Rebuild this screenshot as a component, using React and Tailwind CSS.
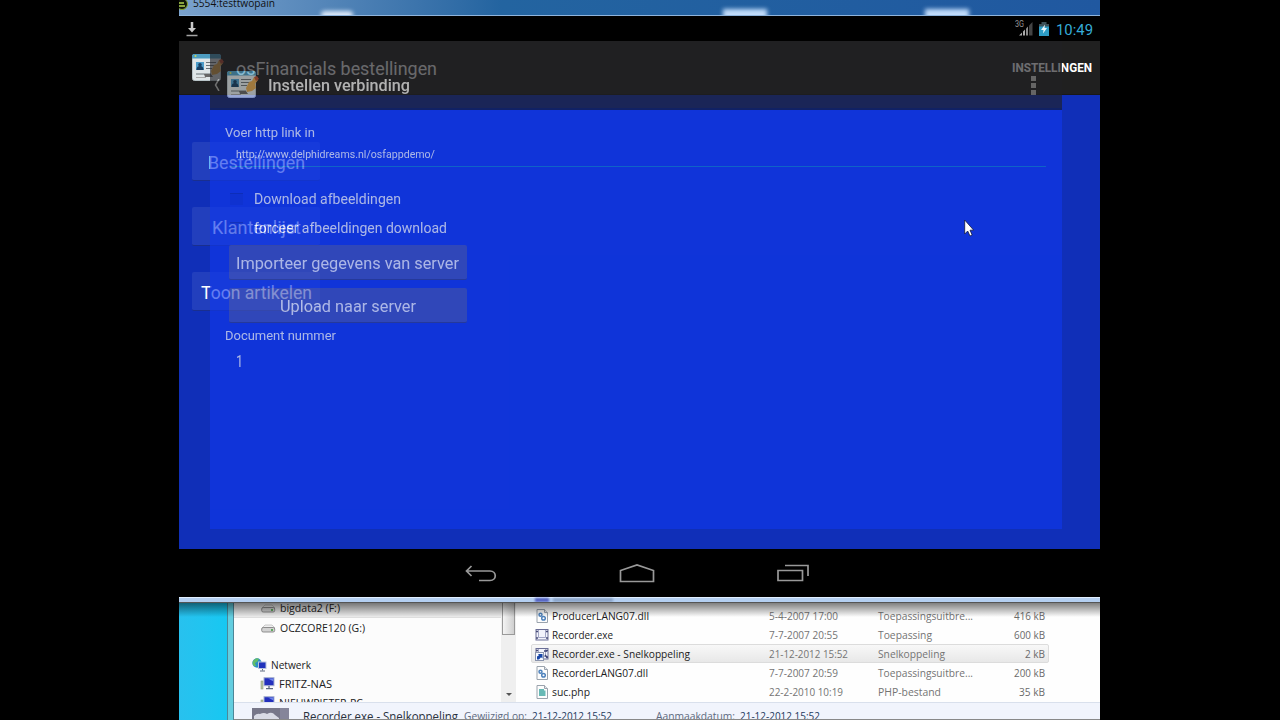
import React from 'react';

const files = [
    { name: 'ProducerLANG07.dll', date: '5-4-2007 17:00', type: 'Toepassingsuitbre...', size: '416 kB', icon: 'dll', w: 97, dw: 69, tw: 95, sw: 31 },
    { name: 'Recorder.exe', date: '7-7-2007 20:55', type: 'Toepassing', size: '600 kB', icon: 'exe', w: 61, dw: 69, tw: 54, sw: 31 },
    { name: 'Recorder.exe - Snelkoppeling', date: '21-12-2012 15:52', type: 'Snelkoppeling', size: '2 kB', icon: 'link', selected: true, w: 138, dw: 79, tw: 67, sw: 20 },
    { name: 'RecorderLANG07.dll', date: '7-7-2007 20:59', type: 'Toepassingsuitbre...', size: '200 kB', icon: 'dll', w: 96, dw: 69, tw: 95, sw: 31 },
    { name: 'suc.php', date: '22-2-2010 10:19', type: 'PHP-bestand', size: '35 kB', icon: 'php', w: 38, dw: 74, tw: 63, sw: 26 },
];

// One line of text that is spread to a fixed width
function Label({ w, size, color, font = 'Open Sans', weight = 400, h = 20, children }) {
    return (
        <svg width={w} height={h} className="block shrink-0 overflow-visible">
            <text x="0" y={h / 2 + size * 0.36} textLength={w} lengthAdjust="spacingAndGlyphs" fontFamily={`"${font}", sans-serif`} fontSize={size} fontWeight={weight} fill={color}>{children}</text>
        </svg>
    );
}

function AppIcon() {
    return (
        <svg width="32" height="28" viewBox="0 0 32 28" className="block shrink-0">
            <rect x="0.5" y="0.5" width="28" height="26" rx="2" fill="#dfe6e8" stroke="#b9c4c8" />
            <path d="M0 4.500V2Q0 0 2 0h25q2 0 2 2v2.500z" fill="#4d9cc0" />
            <circle cx="3.500" cy="2" r="1" fill="#c9d85a" />
            <rect x="4" y="8" width="8" height="8" fill="#4b9cc9" />
            <circle cx="8" cy="10.700" r="1.800" fill="#173f63" />
            <path d="M4.500 16q0-4 3.500-4t3.500 4z" fill="#173f63" />
            <path d="M14 8.500h10M14 11.500h9M14 14.500h6M4 20h15" stroke="#697277" strokeWidth="1" />
            <path d="M4 23.500h10" stroke="#aaa" />
            <path d="M12 20h7l2 3h-8z" fill="#666" />
            <path d="M19 17l3-6 3-1 2-4 4 3-3 4 1 4-4 3-5 1z" fill="#e3a94f" />
            <path d="M27 6l3-1 2 3-3 2z" fill="#b94b32" />
        </svg>
    );
}

function FileIcon({ kind }) {
    if (kind === 'exe' || kind === 'link') {
        return (
            <svg width="14" height="14" viewBox="0 0 14 14" className="block shrink-0">
                <rect x="1" y="1.500" width="12" height="10.500" fill="#f2f3fb" stroke="#6a6e96" />
                <path d="M1 3.500h2M1 10h2M11 3.500h2M11 10h2" stroke="#484c78" strokeWidth="1.500" />
                <path d="M3.500 2v7.500h7V2" fill="none" stroke="#8e93b8" strokeWidth=".8" />
                {kind === 'link' && (
                    <>
                        <rect x="0.500" y="5.500" width="8" height="8" fill="#f7f9ff" stroke="#8a94ad" />
                        <path d="M2 12.500V9.500L4 8.200 3 7h4.500v4.500L6 10.200l-2 2.300z" fill="#1746a8" />
                        <path d="M10 8l2.500 3M9 4h3" stroke="#3d4478" strokeWidth="1.500" />
                    </>
                )}
            </svg>
        );
    }
    return (
        <svg width="14" height="14" viewBox="0 0 14 14" className="block shrink-0">
            <path d="M2 .5h7.500l3 3v10H2z" fill="#fdfdfd" stroke="#9aa3ad" />
            <path d="M9.500.5v3h3" fill="#e4e8ee" stroke="#9aa3ad" />
            {kind === 'dll' ? (
                <g fill="none" stroke="#4f83bd" strokeWidth="1.500">
                    <circle cx="5.500" cy="5.800" r="1.500" />
                    <circle cx="8.500" cy="9.300" r="1.800" />
                </g>
            ) : (
                <path d="M4 4h5v1.500h1.500v5.500H4z" fill="#67b9b5" />
            )}
        </svg>
    );
}

function DriveIcon() {
    return (
        <svg width="16" height="10" viewBox="0 0 16 10" className="block shrink-0">
            <path d="M2 5l3-3h7l3 3z" fill="#f0f0f0" stroke="#b5b5b5" strokeWidth=".7" />
            <rect x="1.700" y="4.500" width="13" height="4.500" rx="1.500" fill="#d2d2d2" stroke="#858585" strokeWidth=".9" />
            <path d="M11 7h2" stroke="#3b9b3b" strokeWidth="1.500" />
        </svg>
    );
}

function ComputerIcon() {
    return (
        <svg width="15" height="13" viewBox="0 0 15 13" className="block shrink-0">
            <rect x="1" y="4" width="2" height="8" fill="#b8c7a0" stroke="#8c9a80" strokeWidth=".6" />
            <rect x="4" y=".7" width="10" height="8" fill="#2330bd" stroke="#a9b3cf" />
            <path d="M8 1.500h5.500v3z" fill="#6f86e8" />
            <path d="M9 9v2M6 11.700h7" stroke="#5e6a80" strokeWidth="1.300" />
        </svg>
    );
}

function NetworkIcon() {
    return (
        <svg width="15" height="14" viewBox="0 0 15 14" className="block shrink-0">
            <circle cx="5" cy="5" r="4.700" fill="#2a8fc4" />
            <path d="M1 3q3-4 6-2L5 4 3 5l1 3-2 0Q0 6 1 3z" fill="#62bd68" />
            <rect x="6.500" y="4" width="7.500" height="6.500" fill="#1f32bb" stroke="#b6c2de" />
            <path d="M10.500 11v1.500M8 13h5" stroke="#5e6a80" />
        </svg>
    );
}

function TitleBar() {
    return (
        <div className="relative flex h-4 shrink-0 items-start overflow-hidden border-b border-[#8fb4dc] bg-linear-to-r from-[#7aa2cd] via-[#2364a0] via-35% to-[#2058a0]">
            <div className="absolute top-[11px] left-[142px] h-2 w-8 rounded-full bg-[#dbe8f8] blur-[2px]" />
            <div className="absolute top-[9px] left-[544px] h-3 w-11 bg-[#c0dbfa] blur-[2px]" />
            <div className="absolute top-[9px] left-[746px] h-3 w-11 bg-[#c0dbfa] blur-[2px]" />
            <svg width="14" height="11" viewBox="0 0 14 11" className="block">
                <circle cx="3" cy="4" r="5.500" fill="#10180a" stroke="#86a52e" />
                <path d="M0 3h5M0 6h6" stroke="#b1d34f" strokeWidth="1.500" />
            </svg>
            <div className="-mt-[7px]">
                <Label w={82} size={11.5} color="#111">5554:testtwopain</Label>
            </div>
        </div>
    );
}

function StatusBar() {
    return (
        <div className="flex h-[25px] shrink-0 items-center justify-between bg-black pr-[7px] pl-[7px]">
            <svg width="12" height="16" viewBox="0 0 12 16" className="block">
                <path d="M6 1v7" stroke="#c8c8c8" strokeWidth="2.500" />
                <path d="M2 7h8l-4 4.500z" fill="#c8c8c8" />
                <path d="M.5 14.500h11" stroke="#a5a5a5" strokeWidth="1.500" />
            </svg>
            <div className="flex items-center">
                <svg width="18" height="17" viewBox="0 0 18 17" className="block">
                    <text x="0" y="7" textLength="9" lengthAdjust="spacingAndGlyphs" fontFamily="Roboto, sans-serif" fontSize="8.500" fill="#999">3G</text>
                    <path d="M4 15.500l3-3v3zM8 11.500l2-2v6H8z" fill="#aaa" />
                    <path d="M11 8.500l2-2v9h-2z" fill="#8b8b8b" />
                    <path d="M14 5.500l3.500-3.500v13.500H14z" fill="#444" />
                </svg>
                <svg width="10" height="14" viewBox="0 0 10 14" className="mr-[7px] ml-[6px] block">
                    <path d="M2.500 0h5v2H10v12H0V2h2.500z" fill="#3c5058" />
                    <path d="M0 4.500h10V14H0z" fill="#2d9cc5" />
                    <path d="M6 2.500L2 8h2.500L4 11.500 8 6H5.500z" fill="#e8f6fb" />
                </svg>
                <Label w={37} size={15.5} color="#35acd8" font="Roboto">10:49</Label>
            </div>
        </div>
    );
}

function MenuButton({ w, children }) {
    return (
        <div className="flex h-[39px] w-32 items-center justify-center rounded-xs border-b border-black/25 bg-white/8 pt-[3px]">
            <Label w={w} size={18} color="#fff" font="Roboto">{children}</Label>
        </div>
    );
}

function MainScreen() {
    return (
        <div className="flex h-full flex-col bg-[#102fb8]">
            <div className="flex h-[54px] items-center justify-between border-b border-[#181818] bg-[#202020] pr-2 pl-[13px]">
                <div className="flex items-center gap-3">
                    <AppIcon />
                    <Label w={201} size={18.5} color="#f3f3f3" font="Roboto" h={24}>osFinancials bestellingen</Label>
                </div>
                <Label w={80} size={12} color="#ffffff" font="Roboto" weight={700}>INSTELLINGEN</Label>
            </div>
            <div className="flex flex-col gap-[26px] pt-[47px] pl-[13px]">
                <MenuButton w={97}>Bestellingen</MenuButton>
                <MenuButton w={89}>Klantenlijst</MenuButton>
                <MenuButton w={111}>Toon artikelen</MenuButton>
            </div>
        </div>
    );
}

function SettingsDialog() {
    return (
        <div className="absolute top-0 left-[31px] flex h-[488px] w-[852px] flex-col bg-[#1038eb] opacity-65">
            <div className="flex h-[69px] items-start justify-between border-b-2 border-[#101a38] bg-[#202024] pt-[30px] pr-[26px] pl-1">
                <div className="flex items-center">
                    <svg width="6" height="12" viewBox="0 0 6 12" className="mr-[7px] block">
                        <path d="M5 0L1.500 6 5 12" fill="none" stroke="#999" strokeWidth="1.500" />
                    </svg>
                    <AppIcon />
                    <div className="ml-[9px]">
                        <Label w={142} size={16.5} color="#fff" font="Roboto" weight={500} h={28}>Instellen verbinding</Label>
                    </div>
                </div>
                <div className="flex flex-col gap-[2px] pt-[5px]">
                    <div className="size-[5px] bg-[#8a8a8a]" />
                    <div className="size-[5px] bg-[#8a8a8a]" />
                    <div className="size-[5px] bg-[#8a8a8a]" />
                </div>
            </div>
            <div className="flex flex-col items-start pt-3 pl-[15px]">
                <Label w={90} size={12.5} color="#fff" font="Roboto">Voer http link in</Label>
                <div className="mt-1 ml-[6px] flex h-[21px] w-[815px] border-b border-[#0f7fd0] pl-[5px]">
                    <Label w={199} size={11} color="#fff" font="Roboto" h={17}>http://www.delphidreams.nl/osfappdemo/</Label>
                </div>
                <div className="mt-[22px] flex h-5 items-center">
                    <div className="mr-[11px] ml-[5px] h-3 w-[13px] border-t border-[#0c2cba] bg-[#0f35de]" />
                    <Label w={147} size={14} color="#fff" font="Roboto">Download afbeeldingen</Label>
                </div>
                <div className="mt-[9px] flex h-5 items-center">
                    <div className="mr-[11px] ml-[5px] h-3 w-[13px] border-t border-[#0c2cba] bg-[#0f35de]" />
                    <Label w={193} size={14} color="#fff" font="Roboto">forceer afbeeldingen download</Label>
                </div>
                <div className="mt-[7px] ml-1 flex h-[35px] w-[238px] items-center justify-center rounded-xs border-b border-black/25 bg-[#4254bb] pt-px pr-px">
                    <Label w={223} size={17} color="#fff" font="Roboto">Importeer gegevens van server</Label>
                </div>
                <div className="mt-2 ml-1 flex h-[35px] w-[238px] items-center justify-center rounded-xs border-b border-black/25 bg-[#4254bb] pt-px pr-px">
                    <Label w={136} size={17} color="#fff" font="Roboto">Upload naar server</Label>
                </div>
                <div className="mt-[2px]">
                    <Label w={111} size={12.5} color="#fff" font="Roboto">Document nummer</Label>
                </div>
                <div className="mt-[6px] ml-[11px]">
                    <Label w={7} size={16.5} color="#fff" font="Roboto">1</Label>
                </div>
            </div>
        </div>
    );
}

function NavBar() {
    return (
        <div className="flex h-12 shrink-0 items-center justify-center gap-[122px] bg-black pr-[6px]">
            <svg width="32" height="18" viewBox="0 0 32 18" fill="none" stroke="#999" strokeWidth="1.700" className="block">
                <path d="M6.500 2L1.500 7l5 5M2 7h23c7 0 7 9.500 0 9.500H14" />
            </svg>
            <svg width="36" height="20" viewBox="0 0 36 20" fill="none" stroke="#999" strokeWidth="1.700" className="block">
                <path d="M1.500 18.500V7.500L18 2l16.500 5.500v11z" />
            </svg>
            <svg width="32" height="18" viewBox="0 0 32 18" fill="none" stroke="#999" strokeWidth="1.700" className="block">
                <path d="M1 6.500h24.500v10H1z" />
                <path d="M8 1.500h23V12" />
            </svg>
        </div>
    );
}

function Sidebar() {
    return (
        <div className="flex w-[267px] flex-col overflow-hidden bg-[#fcfcfc]">
            <div className="-mt-1 flex h-[19px] shrink-0 items-center gap-1 border-b border-[#dedede] bg-[#ececec] pl-[26px]">
                <DriveIcon />
                <Label w={60} size={11.5} color="#222">bigdata2 (F:)</Label>
            </div>
            <div className="flex h-[19px] shrink-0 items-center gap-1 pl-[26px]">
                <DriveIcon />
                <Label w={85} size={11.5} color="#222">OCZCORE120 (G:)</Label>
            </div>
            <div className="mt-[18px] flex h-[19px] shrink-0 items-center gap-1 pl-[18px]">
                <NetworkIcon />
                <Label w={40} size={11.5} color="#222">Netwerk</Label>
            </div>
            <div className="flex h-[19px] shrink-0 items-center gap-1 pl-[26px]">
                <ComputerIcon />
                <Label w={53} size={11.5} color="#222">FRITZ-NAS</Label>
            </div>
            <div className="flex h-[19px] shrink-0 items-center gap-1 pl-[26px]">
                <ComputerIcon />
                <Label w={84} size={11.5} color="#222">NIEUWPIETER-PC</Label>
            </div>
        </div>
    );
}

function FileList() {
    return (
        <div className="flex-1 bg-[#fefefe] pt-[3px] pl-[15px]">
            {files.map((f) => (
                <div key={f.name} className={`flex h-[19px] w-[518px] items-center rounded-xs border ${f.selected ? 'border-[#dcdcdc] bg-linear-to-b from-[#f8f8f8] to-[#e8e8e8]' : 'border-transparent'}`}>
                    <div className="flex w-[237px] items-center gap-[3px] pl-[3px]">
                        <FileIcon kind={f.icon} />
                        <Label w={f.w} size={11.5} color="#1c1c1c">{f.name}</Label>
                    </div>
                    <div className="w-[109px]"><Label w={f.dw} size={11.5} color="#747474">{f.date}</Label></div>
                    <div className="w-[110px]"><Label w={f.tw} size={11.5} color="#747474">{f.type}</Label></div>
                    <div className="flex flex-1 justify-end pr-[3px]"><Label w={f.sw} size={11.5} color="#6a6a6a">{f.size}</Label></div>
                </div>
            ))}
        </div>
    );
}

function Explorer() {
    return (
        <div className="relative flex h-[118px] shrink-0 overflow-hidden border-t border-[#555] bg-[#1cc5f0]">
            <div className="w-12 bg-linear-to-r from-[#28c1ee] to-[#16c8f2]" />
            <div className="w-[7px] border-x border-[#4d8798] bg-[#63cee0]" />
            <div className="flex flex-1 flex-col">
                <div className="flex h-[99px] overflow-hidden">
                    <Sidebar />
                    <div className="flex w-[15px] flex-col items-center justify-between bg-[#efefef] pb-[6px]">
                        <div className="h-8 w-[13px] border border-t-0 border-[#999] bg-linear-to-r from-[#f4f4f4] to-[#cfcfcf]" />
                        <div className="border-x-[3px] border-t-[3px] border-x-transparent border-t-[#555]" />
                    </div>
                    <FileList />
                </div>
                <div className="flex flex-1 items-start overflow-hidden border-t border-b border-t-[#d9e0ec] border-b-[#888] bg-[#f1f4fc] pl-[18px]">
                    <svg width="37" height="14" viewBox="0 0 37 14" className="mt-[5px] block shrink-0">
                        <rect width="37" height="14" fill="#777789" />
                        <path d="M2 14V8q3-3 6-2 4-2 7 0 5-3 8 1l4 3v4z" fill="#d9dbe5" />
                        <path d="M28 0h9v14h-9z" fill="#85859a" />
                    </svg>
                    <div className="mt-[3px] flex">
                        <div className="ml-[14px]"><Label w={155} size={12.5} color="#28303c">Recorder.exe - Snelkoppeling</Label></div>
                        <div className="ml-[6px]"><Label w={63} size={11.5} color="#5d6a80">Gewijzigd op:</Label></div>
                        <div className="ml-[5px]"><Label w={80} size={11.5} color="#22385c">21-12-2012 15:52</Label></div>
                        <div className="ml-11"><Label w={79} size={11.5} color="#5d6a80">Aanmaakdatum:</Label></div>
                        <div className="ml-[5px]"><Label w={80} size={11.5} color="#22385c">21-12-2012 15:52</Label></div>
                    </div>
                </div>
            </div>
            <div className="absolute inset-x-0 top-0 h-[14px] bg-linear-to-b from-black/50 to-transparent" />
        </div>
    );
}

export default function App() {
    return (
        <div className="h-screen w-screen overflow-hidden bg-black pl-[179px]">
            <div className="flex h-full w-[921px] flex-col">
                <TitleBar />
                <StatusBar />
                <div className="relative h-[508px] shrink-0">
                    <MainScreen />
                    <SettingsDialog />
                    <svg width="10" height="18" viewBox="0 0 10 18" className="absolute top-[178px] left-[785px] block">
                        <path d="M.7 1v14l3-3 2.300 5 2.200-1-2.200-4.800h3.700z" fill="#fff" stroke="#101840" strokeWidth=".8" />
                    </svg>
                </div>
                <NavBar />
                <div className="flex h-[5px] shrink-0 border-t border-[#e2efff] bg-[#b4cff1] pl-[356px]">
                    <div className="h-1 w-[14px] bg-[#3b45b5]/80 blur-[1px]" />
                    <div className="ml-1 h-1 w-[60px] bg-[#7089ad]/60 blur-[1px]" />
                </div>
                <Explorer />
            </div>
        </div>
    );
}
